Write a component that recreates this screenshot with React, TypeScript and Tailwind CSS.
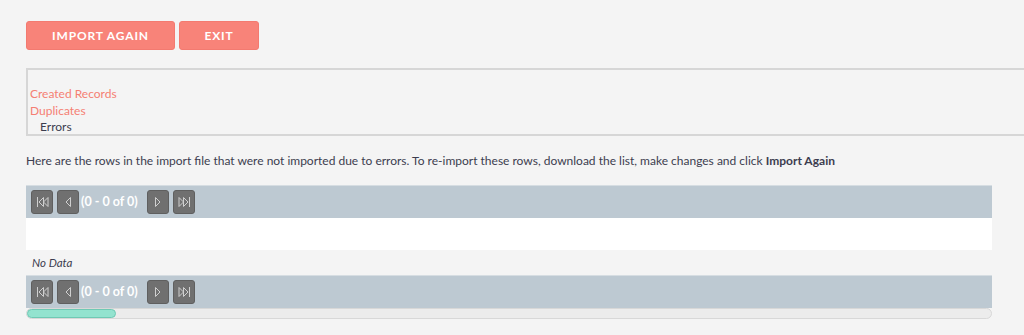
import React from "react";

function FirstIcon() {
  return (
    <svg width="13" height="12" viewBox="0 0 13 12" fill="none" stroke="#cfcfcf" strokeWidth="1">
      <path d="M1.5 1v10" />
      <path d="M7.5 1.5L3 6l4.5 4.5z" />
      <path d="M12 1.5L7.5 6l4.5 4.5z" />
    </svg>
  );
}

function PrevIcon() {
  return (
    <svg width="8" height="12" viewBox="0 0 8 12" fill="none" stroke="#cfcfcf" strokeWidth="1">
      <path d="M6.5 1.5L2 6l4.5 4.5z" />
    </svg>
  );
}

function NextIcon() {
  return (
    <svg width="8" height="12" viewBox="0 0 8 12" fill="none" stroke="#cfcfcf" strokeWidth="1">
      <path d="M1.5 1.5L6 6l-4.5 4.5z" />
    </svg>
  );
}

function LastIcon() {
  return (
    <svg width="13" height="12" viewBox="0 0 13 12" fill="none" stroke="#cfcfcf" strokeWidth="1">
      <path d="M1 1.5L5.5 6 1 10.5z" />
      <path d="M5.5 1.5L10 6l-4.5 4.5z" />
      <path d="M11.5 1v10" />
    </svg>
  );
}

function PageButton({ children }: { children: React.ReactNode }) {
  return (
    <button
      type="button"
      className="flex h-6 w-[22px] items-center justify-center rounded-[3px] border border-[#5f5f5f] bg-[#707070]"
    >
      {children}
    </button>
  );
}

function Pagination() {
  return (
    <div className="flex h-[33px] items-center border-t border-[#d6dde2] bg-[#bdc9d2] pl-[5px]">
      <div className="flex items-center gap-1">
        <PageButton>
          <FirstIcon />
        </PageButton>
        <PageButton>
          <PrevIcon />
        </PageButton>
      </div>
      <span className="ml-[2px] w-[66px] text-[12.5px] font-bold text-white">(0 - 0 of 0)</span>
      <div className="flex items-center gap-1">
        <PageButton>
          <NextIcon />
        </PageButton>
        <PageButton>
          <LastIcon />
        </PageButton>
      </div>
    </div>
  );
}

export default function App() {
  return (
    <div className="h-[335px] w-[1024px] overflow-hidden bg-[#f4f4f4] pl-[26px] pt-[21px] font-['Lato','Open_Sans',sans-serif] text-[12px] text-[#3c3d4f]">
      <div className="flex gap-1">
        <button
          type="button"
          className="h-[29px] w-[149px] rounded-[3px] border border-[#f37a70] bg-[#f88379] text-[12px] font-bold tracking-[0.07em] text-white"
        >
          IMPORT AGAIN
        </button>
        <button
          type="button"
          className="h-[29px] w-[80px] rounded-[3px] border border-[#f37a70] bg-[#f88379] text-[12px] font-bold tracking-[0.07em] text-white"
        >
          EXIT
        </button>
      </div>

      <div className="mt-[18px] h-[68px] w-[1010px] border-2 border-[#d6d6d6] pl-[2px] pt-[16px] leading-[16.5px]">
        <div className="text-[#f57f73]">Created Records</div>
        <div className="text-[#f57f73]">Duplicates</div>
        <div className="pl-[10px] text-[#3c3d4f]">Errors</div>
      </div>

      <p className="mt-[16px] leading-[17px]">
        Here are the rows in the import file that were not imported due to errors. To re-import these rows, download the
        list, make changes and click <b>Import Again</b>
      </p>

      <div className="mt-[16px] w-[966px]">
        <Pagination />
        <div className="h-[32px] bg-white" />
        <div className="h-[25px] pl-[6px] pt-[5px] text-[11.5px] italic leading-[16px]">No Data</div>
        <Pagination />
        <div className="h-[11px] rounded-full border border-[#d8d8d8] bg-[#ececec]">
          <div className="h-full w-[89px] rounded-full border border-[#6fc9b4] bg-[#93e3cf]" />
        </div>
      </div>
    </div>
  );
}
